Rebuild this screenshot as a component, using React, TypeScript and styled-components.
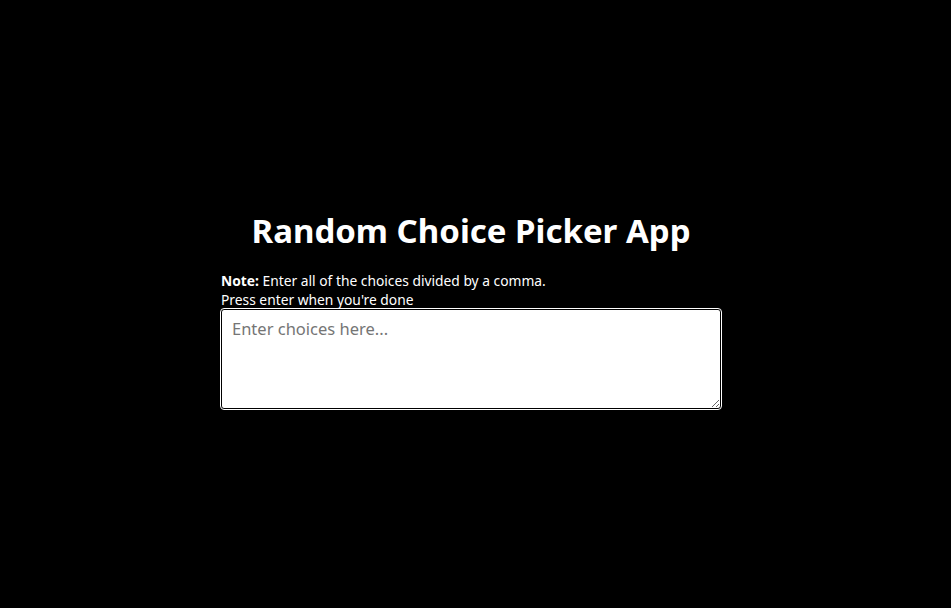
import React from "react";
import styled, { createGlobalStyle } from "styled-components";

const GlobalStyle = createGlobalStyle`
  * { box-sizing: border-box; }
  body {
    margin: 0;
    background-color: #000000;
    font-family: "Noto Sans", "Open Sans", sans-serif;
  }
`;

const Page = styled.div`
  min-height: 100vh;
  padding: 9px 9px 0 0;
  display: flex;
  flex-direction: column;
  align-items: center;
  justify-content: center;
`;

const Container = styled.div`
  width: 500px;
`;

const Title = styled.h3`
  margin: 0 0 18px;
  color: #ffffff;
  font-size: 33px;
  font-weight: 700;
  text-align: center;
`;

const Note = styled.p`
  margin: 0;
  color: #ffffff;
  font-size: 13.8px;
  line-height: 19px;

  strong {
    font-weight: 700;
  }
`;

const ChoicesInput = styled.textarea`
  display: block;
  width: 500px;
  height: 100px;
  margin: 0;
  padding: 7px 10px 10px;
  border: 1px solid #000000;
  border-radius: 3px;
  outline: 1px solid #ffffff;
  background-color: #ffffff;
  color: #000000;
  font-family: inherit;
  font-size: 16.5px;

  &:focus {
    outline: 1px solid #ffffff;
  }

  &::placeholder {
    color: #757575;
  }
`;

export default function App() {
  return (
    <>
      <GlobalStyle />
      <Page>
        <Container>
          <Title>Random Choice Picker App</Title>
          <Note>
            <strong>Note:</strong> Enter all of the choices divided by a comma.
            <br />
            Press enter when you're done
          </Note>
          <ChoicesInput placeholder="Enter choices here..." autoFocus />
        </Container>
      </Page>
    </>
  );
}
